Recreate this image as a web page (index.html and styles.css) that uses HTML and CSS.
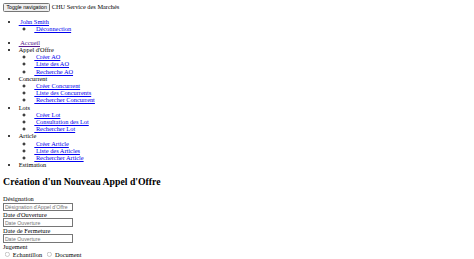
FILE: index.html
```html
<!DOCTYPE html>
<html lang="fr">
<head>
<meta charset="utf-8">
<title>CHU Service des Marchés</title>
<link rel="stylesheet" href="styles.css">
</head>
<body class="page">
<div class="wrapper">
  <nav class="navbar">
    <div class="navbar-header">
      <button type="button" class="navbar-toggle">Toggle navigation</button>
      <span class="navbar-brand">CHU Service des Marchés</span>
    </div>
    <ul class="top-links">
      <li><a href="#">&nbsp;John Smith</a>
        <ul class="sub">
          <li><a href="#">&nbsp;Déconnection</a></li>
        </ul>
      </li>
    </ul>
    <ul class="side-menu">
      <li><a class="visited" href="#">&nbsp;Accueil</a></li>
      <li>Appel d'Offre
        <ul class="sub">
          <li><a href="#">&nbsp;Créer AO</a></li>
          <li><a href="#">&nbsp;Liste des AO</a></li>
          <li><a href="#">&nbsp;Recherche AO</a></li>
        </ul>
      </li>
      <li>Concurrent
        <ul class="sub">
          <li><a href="#">&nbsp;Créer Concurrent</a></li>
          <li><a href="#">&nbsp;Liste des Concurrents</a></li>
          <li><a href="#">&nbsp;Rechercher Concurrent</a></li>
        </ul>
      </li>
      <li>Lots
        <ul class="sub">
          <li><a href="#">&nbsp;Créer Lot</a></li>
          <li><a href="#">&nbsp;Consultation des Lot</a></li>
          <li><a href="#">&nbsp;Rechercher Lot</a></li>
        </ul>
      </li>
      <li>Article
        <ul class="sub">
          <li><a href="#">&nbsp;Créer Article</a></li>
          <li><a href="#">&nbsp;Liste des Articles</a></li>
          <li><a href="#">&nbsp;Rechercher Article</a></li>
        </ul>
      </li>
      <li>Estimation</li>
    </ul>
  </nav>
  <div class="page-wrapper">
    <h1 class="page-title">Création d'un Nouveau Appel d'Offre</h1>
    <form class="form">
      <div class="form-group">
        <label class="form-label">Désignation</label>
        <input class="form-control" type="text" placeholder="Désignation d'Appel d'Offre">
      </div>
      <div class="form-group">
        <label class="form-label">Date d'Ouverture</label>
        <input class="form-control" type="text" placeholder="Date Ouverture">
      </div>
      <div class="form-group">
        <label class="form-label">Date de Fermeture</label>
        <input class="form-control" type="text" placeholder="Date Ouverture">
      </div>
      <div class="form-group">
        <label class="form-label">Jugement</label>
        <div class="radios">
          <label class="radio"><input type="radio" name="jug"> Echantillon</label>
          <label class="radio"><input type="radio" name="jug"> Document</label>
        </div>
      </div>
    </form>
  </div>
</div>
</body>
</html>
```
FILE: styles.css
```css
.page {
  margin: 0;
  font-family: "Liberation Serif", "Times New Roman", serif;
}
.wrapper {
  zoom: 0.39;
  padding: 8px;
  font-size: 16.3px;
  line-height: 18.45px;
}
.navbar-header {
  display: block;
}
.navbar-toggle {
  font-family: "Liberation Sans", Arial, sans-serif;
}
.top-links,
.side-menu {
  margin: 16px 0;
  padding-left: 40px;
}
.sub {
  margin: 0;
  padding-left: 40px;
  list-style: circle;
}
a {
  color: #0000ee;
}
a.visited {
  color: #551a8b;
}
.page-title {
  font-size: 25px;
  line-height: 29px;
  margin: 20px 0;
}
.form-group {
  display: block;
}
.form-label {
  display: block;
}
.form-control {
  display: block;
  width: 170px;
}
.radio {
  margin-right: 4px;
}
```
